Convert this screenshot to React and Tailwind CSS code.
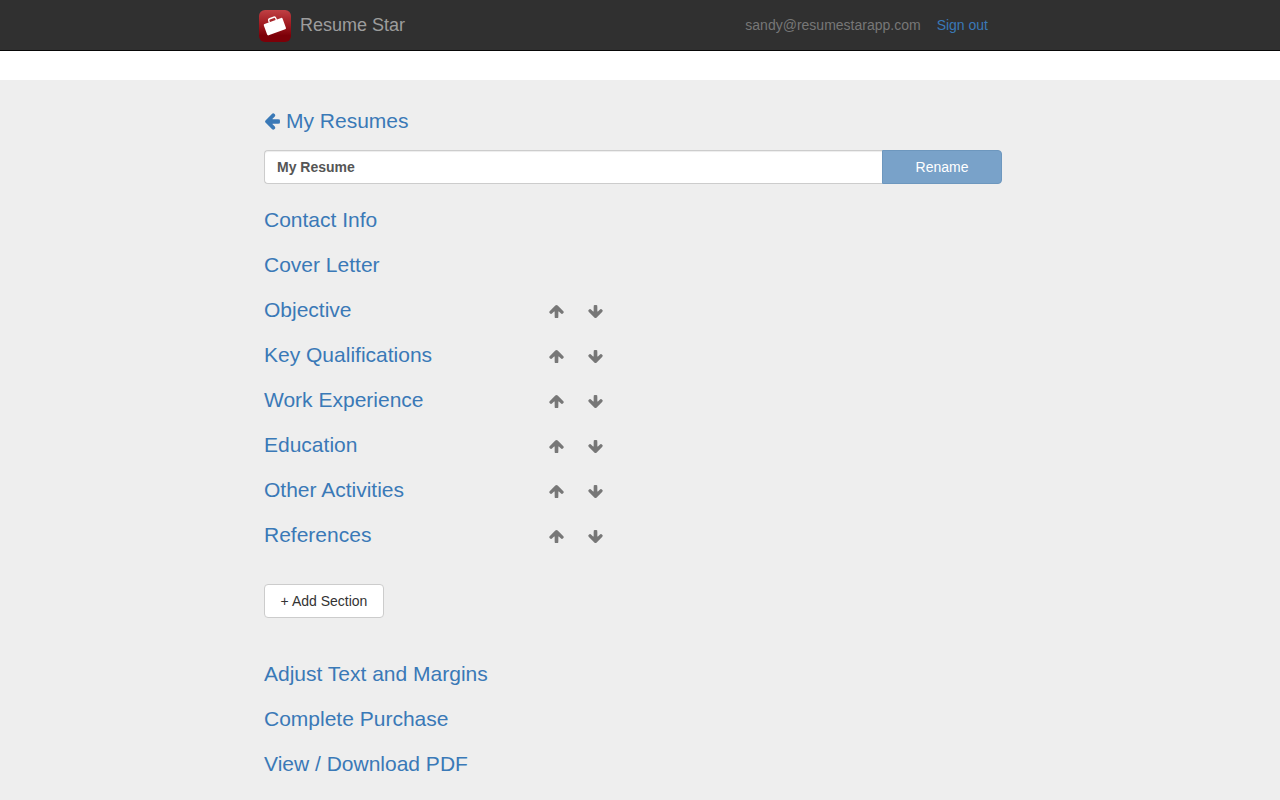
import { useState } from "react";

const sections = [
  { title: "Contact Info" },
  { title: "Cover Letter" },
  { title: "Objective", movable: true },
  { title: "Key Qualifications", movable: true },
  { title: "Work Experience", movable: true },
  { title: "Education", movable: true },
  { title: "Other Activities", movable: true },
  { title: "References", movable: true },
];

const actions = [
  "Adjust Text and Margins",
  "Complete Purchase",
  "View / Download PDF",
];

const ArrowIcon = ({ className }) => (
  <svg viewBox="0 0 16 16" className={className} aria-hidden="true">
    <path
      d="M2.2 8.7 8 2.9 13.8 8.7M8 3.5V13.2"
      fill="none"
      stroke="currentColor"
      strokeWidth="3.6"
      strokeLinecap="round"
      strokeLinejoin="round"
    />
    <path d="M8 2.5 11.5 7 9.8 8.2V14.8H6.2V8.2L4.5 7Z" fill="currentColor" />
  </svg>
);

const Logo = () => (
  <svg viewBox="0 0 32 32" className="size-8" aria-hidden="true">
    <defs>
      <linearGradient id="logo-red" x1="0" y1="0" x2="0" y2="1">
        <stop offset="0" stopColor="#c04044" />
        <stop offset="0.45" stopColor="#a01a20" />
        <stop offset="0.8" stopColor="#7c0008" />
        <stop offset="1" stopColor="#7c0008" />
      </linearGradient>
    </defs>
    <rect width="32" height="32" rx="6" fill="url(#logo-red)" />
    <g transform="rotate(-20 16 17)">
      <rect x="6" y="10.6" width="20" height="12" rx="1.2" fill="#fff" />
      <path
        d="M12.3 11V8.9Q12.3 7.4 13.8 7.4H18.2Q19.7 7.4 19.7 8.9V11"
        fill="none"
        stroke="#fff"
        strokeWidth="1.4"
      />
    </g>
  </svg>
);

const Header = () => (
  <header className="border-b border-[#080808] bg-[#303030] pr-[14px]">
    <div className="mx-auto flex h-[50px] max-w-[748px] items-center justify-between pr-[19px]">
      <a href="#" className="flex items-center gap-[9px] text-lg text-[#9d9d9d]">
        <span className="pt-px">
          <Logo />
        </span>
        Resume Star
      </a>
      <div className="flex items-center gap-4 text-sm">
        <span className="text-[#777]">sandy@resumestarapp.com</span>
        <a href="#" className="text-[#3a79b7]">
          Sign out
        </a>
      </div>
    </div>
  </header>
);

const RenameForm = () => {
  const [name, setName] = useState("My Resume");

  return (
    <form className="mt-3 flex" onSubmit={(e) => e.preventDefault()}>
      <input
        type="text"
        aria-label="Resume name"
        value={name}
        onChange={(e) => setName(e.target.value)}
        className="h-[34px] min-w-0 flex-1 rounded-l border border-r-0 border-[#ccc] bg-white px-3 text-sm font-bold text-[#555] shadow-[inset_0_1px_1px_rgba(0,0,0,0.075)]"
      />
      <button
        type="submit"
        className="h-[34px] w-[120px] rounded-r border border-[#6d97be] bg-[#79a2c9] text-sm text-white"
      >
        Rename
      </button>
    </form>
  );
};

const SectionRow = ({ title, movable }) => (
  <li className="flex h-[45px] items-center text-[21px]">
    <div className="w-[285px]">
      <a href="#">{title}</a>
    </div>
    {movable && (
      <div className="flex gap-6 pt-[3px] text-[#777]">
        <button type="button" aria-label={`Move ${title} up`}>
          <ArrowIcon className="size-[15px]" />
        </button>
        <button type="button" aria-label={`Move ${title} down`}>
          <ArrowIcon className="size-[15px] rotate-180" />
        </button>
      </div>
    )}
  </li>
);

const App = () => {
  return (
    <div className="flex min-h-screen flex-col bg-white font-['Helvetica_Neue','Liberation_Sans',Arial,sans-serif]">
      <Header />
      <main className="mt-[29px] flex-1 bg-[#eee] pt-6 pr-[14px] pb-[14px]">
        <div className="mx-auto max-w-[738px] text-[#3a79b7]">
          <h1 className="flex text-[21px] leading-[34px]">
            <a href="#" className="flex items-center gap-[5px]">
              <ArrowIcon className="mt-px size-[17px] -rotate-90" />
              My Resumes
            </a>
          </h1>
          <RenameForm />
          <ul className="mt-[13px]">
            {sections.map((section) => (
              <SectionRow key={section.title} {...section} />
            ))}
          </ul>
          <button
            type="button"
            className="mt-[27px] block h-[34px] w-[120px] rounded border border-[#ccc] bg-white text-sm text-[#333]"
          >
            + Add Section
          </button>
          <ul className="mt-[33px]">
            {actions.map((action) => (
              <SectionRow key={action} title={action} />
            ))}
          </ul>
        </div>
      </main>
    </div>
  );
};

export default App;
